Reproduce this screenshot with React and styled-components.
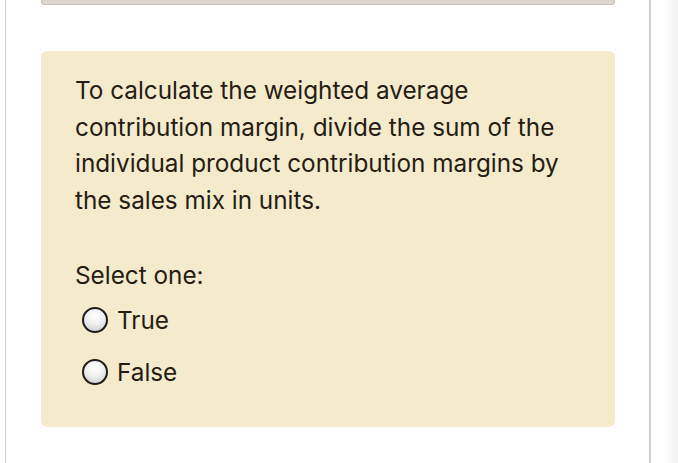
import React from "react";
import styled, { createGlobalStyle } from "styled-components";

const Global = createGlobalStyle`
  html, body { margin: 0; padding: 0; background: #fff; }
  body { font-family: Inter, "Noto Sans", sans-serif; }
`;

const Page = styled.div`
  width: 678px;
  height: 463px;
  overflow: hidden;
  display: flex;
  background: linear-gradient(to right, #fff 0, #fff 662px, #f2f2f2 678px);
`;

const Column = styled.div`
  margin-left: 5px;
  width: 646px;
  height: 463px;
  border-left: 1px solid #cfcfcf;
  border-right: 2px solid #d0d0d0;
  background: #fff;
  padding: 0 34px 0 35px;
  box-sizing: border-box;
  display: flex;
  flex-direction: column;
  gap: 46px;
`;

const PrevCard = styled.div`
  height: 4px;
  background: #ddd6cf;
  border: 1px solid #c4bcb5;
  border-top: none;
  border-radius: 0 0 4px 4px;
`;

const Card = styled.div`
  background: #f4ebcd;
  border-radius: 6px;
  height: 376px;
  padding: 21px 30px 0 34px;
  box-sizing: border-box;
  color: #261c14;
`;

const Question = styled.p`
  margin: 0;
  font-size: 24.3px;
  line-height: 36.7px;
  letter-spacing: 0;
`;

const Prompt = styled.div`
  margin-top: 41px;
  font-size: 24.3px;
  line-height: 30px;
`;

const Options = styled.div`
  display: flex;
  flex-direction: column;
  gap: 22px;
  margin-top: 15px;
  padding-left: 7px;
`;

const Option = styled.label`
  display: flex;
  align-items: center;
  gap: 9px;
  font-size: 24.3px;
  line-height: 30px;
`;

const Radio = styled.span`
  width: 22px;
  height: 22px;
  border-radius: 50%;
  border: 2px solid #1c1c1c;
  background: radial-gradient(circle at 50% 30%, #ffffff 0%, #f0f0f0 45%, #c6c6c6 100%);
  flex: none;
`;

export default function App() {
  return (
    <>
      <Global />
      <Page>
        <Column>
          <PrevCard />
          <Card>
            <Question>
              To calculate the weighted average contribution margin, divide the
              sum of the individual product contribution margins by the sales
              mix in units.
            </Question>
            <Prompt>Select one:</Prompt>
            <Options>
              <Option>
                <Radio />
                True
              </Option>
              <Option>
                <Radio />
                False
              </Option>
            </Options>
          </Card>
        </Column>
      </Page>
    </>
  );
}
